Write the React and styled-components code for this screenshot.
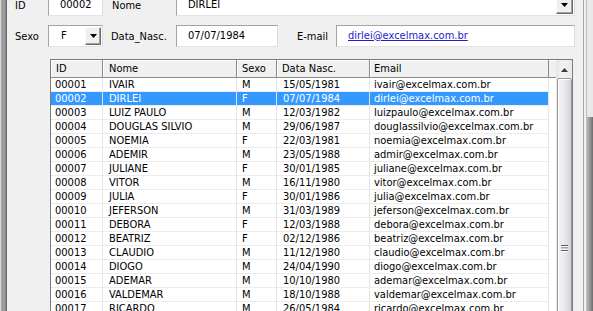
import React from "react";
import styled, { createGlobalStyle } from "styled-components";

const Global = createGlobalStyle`
  html, body { margin: 0; padding: 0; background: #f0f0f0; overflow: hidden; }
  * { box-sizing: border-box; }
`;

const FONT = `"DejaVu Sans Condensed", "DejaVu Sans", "Liberation Sans", sans-serif`;

const Screen = styled.div`
  display: flex;
  width: 593px;
  height: 311px;
  overflow: hidden;
  background: #f0f0f0;
  font-family: ${FONT};
  font-stretch: condensed;
  font-size: 11px;
  color: #000;
`;

const LeftFrame = styled.div`
  width: 7px;
  flex: none;
  background: linear-gradient(to right, #d6d6d6 0px, #d6d6d6 1px, #8a8a8a 2px, #a8a8a8 4px, #7a7a7a 6px, #5a5a5a 7px);
`;

const Form = styled.div`
  width: 576px;
  flex: none;
  display: flex;
  flex-direction: column;
  padding-left: 8px;
  margin-top: -6px;
`;

const FieldRow = styled.div`
  display: flex;
  align-items: center;
  height: 22px;
  margin-top: ${(p) => p.$top || 0}px;
`;

const Label = styled.div`
  width: ${(p) => p.$w}px;
  margin-left: ${(p) => p.$ml || 0}px;
  flex: none;
  line-height: 22px;
  padding-top: 1px;
`;

const Box = styled.div`
  width: ${(p) => p.$w}px;
  height: 22px;
  flex: none;
  display: flex;
  align-items: center;
  background: #fff;
  border: 1px solid;
  border-color: #a3a3a3 #dcdcdc #e3e3e3 #a3a3a3;
  padding-left: ${(p) => p.$pl || 11}px;
  padding-bottom: 2px;
  position: relative;
`;

const Link = styled.span`
  color: #1c1cc8;
  text-decoration: underline;
`;

const DropButton = styled.div`
  position: absolute;
  right: 1px;
  top: 1px;
  bottom: 1px;
  width: ${(p) => p.$w || 16}px;
  background: #f0f0f0;
  border: 1px solid;
  border-color: #fbfbfb #6a6a6a #6a6a6a #fbfbfb;
  box-shadow: inset -1px -1px 0 #a0a0a0;
  display: flex;
  align-items: center;
  justify-content: center;
`;

const Arrow = () => (
  <svg width="7" height="4" viewBox="0 0 7 4">
    <path d="M0 0H7L3.5 4Z" fill="#000" />
  </svg>
);

const GridBox = styled.div`
  margin-top: 12px;
  margin-left: 35px;
  width: 523px;
  flex: 1;
  display: flex;
  border: 1px solid #7c7c7c;
  border-bottom: none;
  background: #fff;
  min-height: 0;
`;

const Table = styled.div`
  width: 505px;
  flex: none;
  display: flex;
  flex-direction: column;
`;

const COLS = "52px 134px 40px 93px 179px 7px";

const HeaderRow = styled.div`
  display: grid;
  grid-template-columns: ${COLS};
  height: 18px;
  flex: none;
`;

const HeadCell = styled.div`
  background: #f0f0f0;
  border-right: 1px solid #8a8a8a;
  border-bottom: 1px solid #8a8a8a;
  box-shadow: inset 1px 1px 0 #fff;
  padding-left: ${(p) => p.$pl}px;
  line-height: 17px;
  white-space: nowrap;
`;

const Filler = styled.div`
  background: #f0f0f0;
  border-bottom: 1px solid #8a8a8a;
  box-shadow: inset 0 1px 0 #fff;
`;

const Row = styled.div`
  display: grid;
  grid-template-columns: ${COLS};
  height: 14px;
  flex: none;
  color: ${(p) => (p.$sel ? "#fff" : "#000")};
`;

const Cell = styled.div`
  background: ${(p) => (p.$sel ? "#3399ff" : "#fff")};
  border-right: 1px solid #e4e4e4;
  border-bottom: 1px solid #ececec;
  padding-left: ${(p) => p.$pl}px;
  line-height: 13px;
  white-space: nowrap;
  overflow: hidden;
`;

const BlankCell = styled.div`
  background: #fff;
`;

const ScrollBar = styled.div`
  width: 16px;
  flex: none;
  display: flex;
  flex-direction: column;
  background: linear-gradient(to right, #e6e6e6, #f2f2f2 40%, #e9e9e9);
`;

const ScrollArrow = styled.div`
  height: 18px;
  flex: none;
  display: flex;
  align-items: center;
  justify-content: center;
  padding-top: 1px;
`;

const Thumb = styled.div`
  height: 342px;
  flex: none;
  margin: 0 0 0 1px;
  width: 15px;
  border: 1px solid #9a9a9a;
  border-radius: 2px;
  background: linear-gradient(to right, #f4f4f4, #e8e8ec 50%, #d2d2d8);
  box-shadow: inset 1px 1px 0 #fff;
  display: flex;
  align-items: center;
  justify-content: center;
`;

const Grip = () => (
  <svg width="7" height="8" viewBox="0 0 7 8">
    <path d="M0 0.5H7M0 3H7M0 5.5H7" stroke="#5c5c5c" strokeWidth="1" />
    <path d="M0 1.5H7M0 4H7M0 6.5H7" stroke="#fff" strokeWidth="1" />
  </svg>
);

const RightFrame = styled.div`
  flex: 1;
  display: flex;
  border-left: 1px solid #a6a6a6;
  padding-left: 2px;
`;

const OuterTrack = styled.div`
  flex: 1;
  display: flex;
  flex-direction: column;
  border-left: 1px solid #bcbcbc;
  background: #e9e9e9;
`;

const OuterGap = styled.div`
  height: 117px;
  flex: none;
`;

const OuterThumb = styled.div`
  flex: 1;
  background: linear-gradient(to right, #b8b8b8, #8e8e8e 60%, #6e6e6e);
`;

const rows = [
  ["00001", "IVAIR", "M", "15/05/1981", "ivair@excelmax.com.br"],
  ["00002", "DIRLEI", "F", "07/07/1984", "dirlei@excelmax.com.br"],
  ["00003", "LUIZ PAULO", "M", "12/03/1982", "luizpaulo@excelmax.com.br"],
  ["00004", "DOUGLAS SILVIO", "M", "29/06/1987", "douglassilvio@excelmax.com.br"],
  ["00005", "NOEMIA", "F", "22/03/1981", "noemia@excelmax.com.br"],
  ["00006", "ADEMIR", "M", "23/05/1988", "admir@excelmax.com.br"],
  ["00007", "JULIANE", "F", "30/01/1985", "juliane@excelmax.com.br"],
  ["00008", "VITOR", "M", "16/11/1980", "vitor@excelmax.com.br"],
  ["00009", "JULIA", "F", "30/01/1986", "julia@excelmax.com.br"],
  ["00010", "JEFERSON", "M", "31/03/1989", "jeferson@excelmax.com.br"],
  ["00011", "DEBORA", "F", "12/03/1988", "debora@excelmax.com.br"],
  ["00012", "BEATRIZ", "F", "02/12/1986", "beatriz@excelmax.com.br"],
  ["00013", "CLAUDIO", "M", "11/12/1980", "claudio@excelmax.com.br"],
  ["00014", "DIOGO", "M", "24/04/1990", "diogo@excelmax.com.br"],
  ["00015", "ADEMAR", "M", "10/10/1980", "ademar@excelmax.com.br"],
  ["00016", "VALDEMAR", "M", "18/10/1988", "valdemar@excelmax.com.br"],
  ["00017", "RICARDO", "M", "26/05/1984", "ricardo@excelmax.com.br"],
];

const PADS = [4, 6, 5, 6, 4];
const HEAD_PADS = [5, 6, 5, 5, 4];
const HEADS = ["ID", "Nome", "Sexo", "Data Nasc.", "Email"];

export default function App() {
  return (
    <Screen>
      <Global />
      <LeftFrame />
      <Form>
        <FieldRow>
          <Label $w={33}>ID</Label>
          <Box $w={55}>00002</Box>
          <Label $w={64} $ml={9}>Nome</Label>
          <Box $w={399}>
            DIRLEI
            <DropButton $w={17}>
              <Arrow />
            </DropButton>
          </Box>
        </FieldRow>
        <FieldRow $top={9}>
          <Label $w={33}>Sexo</Label>
          <Box $w={55} $pl={12}>
            F
            <DropButton>
              <Arrow />
            </DropButton>
          </Box>
          <Label $w={65} $ml={8}>Data_Nasc.</Label>
          <Box $w={102}>07/07/1984</Box>
          <Label $w={39} $ml={19}>E-mail</Label>
          <Box $w={239}>
            <Link>dirlei@excelmax.com.br</Link>
          </Box>
        </FieldRow>
        <GridBox>
          <Table>
            <HeaderRow>
              {HEADS.map((h, i) => (
                <HeadCell key={h} $pl={HEAD_PADS[i]}>
                  {h}
                </HeadCell>
              ))}
              <Filler />
            </HeaderRow>
            {rows.map((r) => {
              const sel = r[0] === "00002";
              return (
                <Row key={r[0]} $sel={sel}>
                  {r.map((c, i) => (
                    <Cell key={i} $sel={sel} $pl={PADS[i]}>
                      {c}
                    </Cell>
                  ))}
                  <BlankCell />
                </Row>
              );
            })}
          </Table>
          <ScrollBar>
            <ScrollArrow>
              <svg width="7" height="4" viewBox="0 0 7 4">
                <path d="M3.5 0L7 4H0Z" fill="#3c3c3c" />
              </svg>
            </ScrollArrow>
            <Thumb>
              <Grip />
            </Thumb>
          </ScrollBar>
        </GridBox>
      </Form>
      <RightFrame>
        <OuterTrack>
          <OuterGap />
          <OuterThumb />
        </OuterTrack>
      </RightFrame>
    </Screen>
  );
}
